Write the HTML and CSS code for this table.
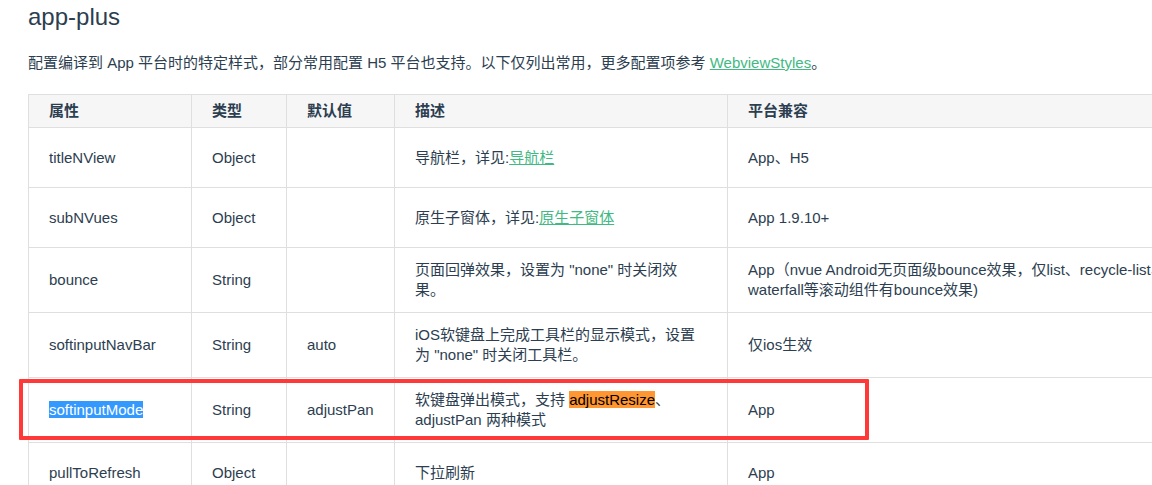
FILE: index.html
```html
<!DOCTYPE html>
<html lang="zh-CN">
<head>
<meta charset="utf-8">
<title>app-plus</title>
<link rel="stylesheet" href="styles.css">
</head>
<body>
<div class="page">
  <h2 class="title">app-plus</h2>
  <p class="intro">配置编译到 App 平台时的特定样式，部分常用配置 H5 平台也支持。以下仅列出常用，更多配置项参考 <a class="link" href="#">WebviewStyles</a>。</p>
  <div class="table-wrap">
    <table class="props">
      <colgroup>
        <col class="c-name">
        <col class="c-type">
        <col class="c-default">
        <col class="c-desc">
        <col class="c-platform">
      </colgroup>
      <thead>
        <tr>
          <th>属性</th>
          <th>类型</th>
          <th>默认值</th>
          <th class="desc">描述</th>
          <th>平台兼容</th>
        </tr>
      </thead>
      <tbody>
        <tr>
          <td>titleNView</td>
          <td>Object</td>
          <td></td>
          <td class="desc">导航栏，详见:<a class="link" href="#">导航栏</a></td>
          <td>App、H5</td>
        </tr>
        <tr>
          <td>subNVues</td>
          <td>Object</td>
          <td></td>
          <td class="desc">原生子窗体，详见:<a class="link" href="#">原生子窗体</a></td>
          <td>App 1.9.10+</td>
        </tr>
        <tr>
          <td>bounce</td>
          <td>String</td>
          <td></td>
          <td class="desc">页面回弹效果，设置为 "none" 时关闭效果。</td>
          <td>App（nvue Android无页面级bounce效果，仅list、recycle-list、waterfall等滚动组件有bounce效果)</td>
        </tr>
        <tr>
          <td>softinputNavBar</td>
          <td>String</td>
          <td>auto</td>
          <td class="desc">iOS软键盘上完成工具栏的显示模式，设置为 "none" 时关闭工具栏。</td>
          <td>仅ios生效</td>
        </tr>
        <tr>
          <td><span class="selected">softinputMode</span></td>
          <td>String</td>
          <td>adjustPan</td>
          <td class="desc">软键盘弹出模式，支持 <span class="found">adjustResize</span>、adjustPan 两种模式</td>
          <td>App</td>
        </tr>
        <tr>
          <td>pullToRefresh</td>
          <td>Object</td>
          <td></td>
          <td class="desc">下拉刷新</td>
          <td>App</td>
        </tr>
      </tbody>
    </table>
    <div class="annot"></div>
  </div>
</div>
</body>
</html>
```

FILE: styles.css
```css
html, body {
  margin: 0;
  padding: 0;
  background: #fff;
  overflow: hidden;
}

body {
  font-family: "Liberation Sans", Arial, "Noto Sans CJK SC", sans-serif;
  font-size: 15px;
  color: #2c3e50;
}

.page {
  padding: 0 28px;
}

.title {
  margin: 2px 0 0;
  font-size: 24px;
  line-height: 30px;
  font-weight: normal;
  color: #2c3e50;
}

.intro {
  margin: 21px 0 0;
  line-height: 20px;
  white-space: nowrap;
}

.link {
  color: #42b983;
  text-decoration: underline;
}

.table-wrap {
  position: relative;
  margin-top: 21px;
  width: 1169px;
}

.props {
  border-collapse: collapse;
  table-layout: fixed;
  width: 1169px;
}

.c-name { width: 163px; }
.c-type { width: 95px; }
.c-default { width: 108px; }
.c-desc { width: 333px; }
.c-platform { width: 470px; }

.props th,
.props td {
  border: 1px solid #dfdfdf;
  text-align: left;
  line-height: 20px;
  padding: 12px 20px 12px 20px;
  vertical-align: middle;
}

.props th {
  background: #f6f6f6;
  font-weight: bold;
  padding-top: 6px;
  padding-bottom: 6px;
}

.props th.desc,
.props td.desc {
  padding-right: 27px;
}

.props tbody tr {
  height: 60px;
}

.selected {
  background: #3399ff;
  color: #fff;
}

.found {
  background: #ff9632;
  color: #000;
}

.annot {
  position: absolute;
  left: -9px;
  top: 285px;
  width: 850px;
  height: 61px;
  box-sizing: border-box;
  border: 4px solid #ff3838;
  border-radius: 1px;
}
```
